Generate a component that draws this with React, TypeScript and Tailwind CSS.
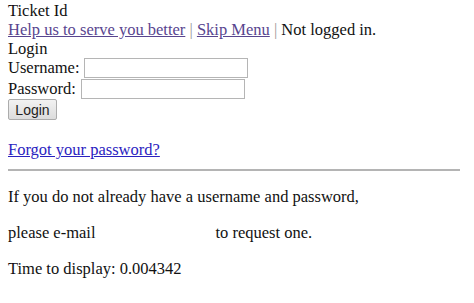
export default function App() {
  return (
    <div className="bg-white px-2 pt-0 text-[16.5px] leading-[19px] text-[#111] font-['Liberation_Serif','Times_New_Roman',serif] w-[474px] h-[303px] overflow-hidden">
      <div className="h-[19px] pt-[1px]">Ticket Id</div>
      <div className="h-[19px] pt-[1px]">
        <a href="#" className="text-[#58458f] underline">Help us to serve you better</a>
        <span className="text-[#999]"> | </span>
        <a href="#" className="text-[#58458f] underline">Skip Menu</a>
        <span className="text-[#999]"> | </span>
        Not logged in.
      </div>
      <form onSubmit={(e) => e.preventDefault()}>
        <div className="h-[19px] pt-[1px]">Login</div>
        <div className="flex items-center h-[21px]">
          <span>Username:</span>
          <input className="ml-[5px] w-[164px] h-[20px] border border-[#b5b5b5] bg-white outline-none" />
        </div>
        <div className="flex items-center h-[21px]">
          <span>Password:</span>
          <input type="password" className="ml-[5px] w-[164px] h-[20px] border border-[#b5b5b5] bg-white outline-none" />
        </div>
        <button className="mt-[0px] w-[49px] h-[21px] border border-[#acacac] rounded-[2px] bg-gradient-to-b from-[#f2f2f2] to-[#dcdcdc] text-[14px] leading-[18px] text-[#222] font-['Liberation_Sans',Arial,sans-serif]">
          Login
        </button>
      </form>
      <p className="mt-[20px] h-[19px]">
        <a href="#" className="text-[#2a22c0] underline">Forgot your password?</a>
      </p>
      <hr className="mt-[10px] w-[452px] border-0 border-t-2 border-[#b4b4b4]" />
      <p className="mt-[16px] h-[19px]">If you do not already have a username and password,</p>
      <p className="mt-[17px] h-[19px]">
        please e-mail<span className="inline-block w-[120px]" />to request one.
      </p>
      <p className="mt-[17px] h-[19px]">Time to display: 0.004342</p>
    </div>
  )
}
